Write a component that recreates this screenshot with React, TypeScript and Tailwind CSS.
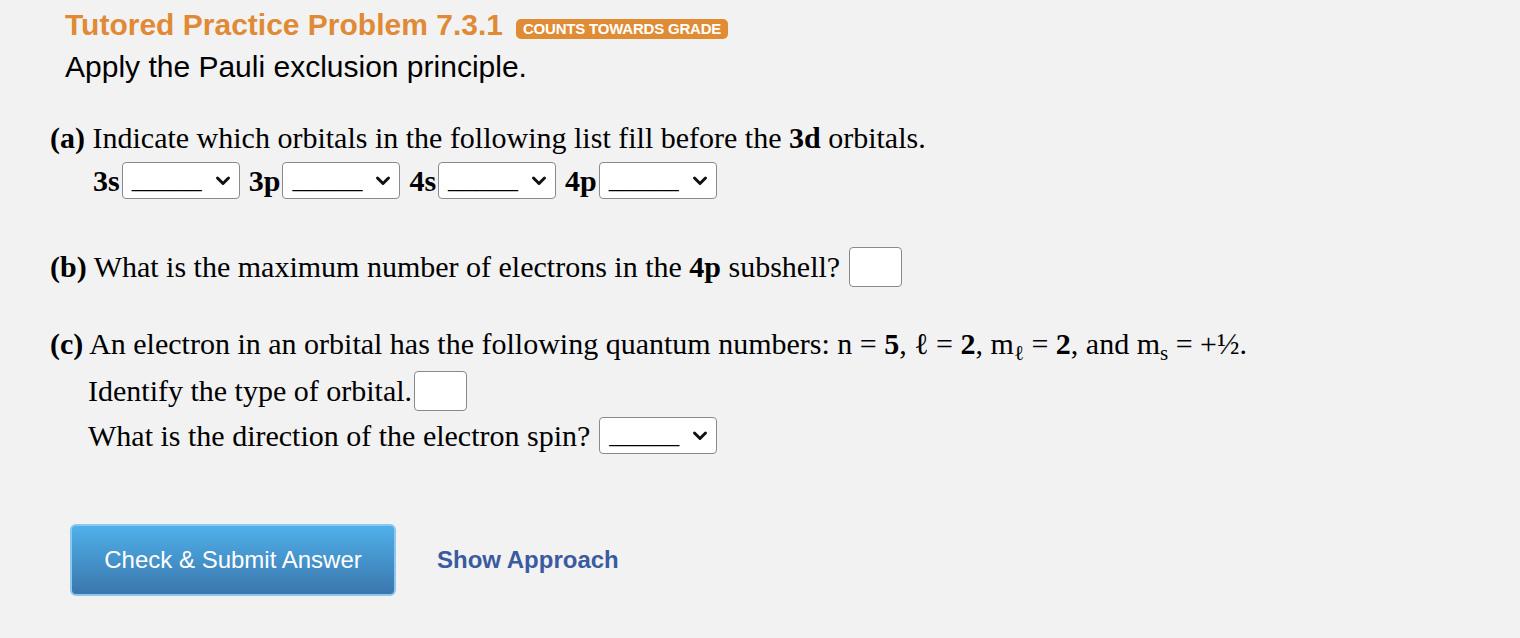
import React from "react";

const serif = "font-['Liberation_Serif','Times_New_Roman',serif]";

const Chevron = () => (
  <svg width="16" height="11" viewBox="0 0 16 11" className="shrink-0">
    <path d="M2.5 3 L8 8.5 L13.5 3" fill="none" stroke="#111" strokeWidth="3" strokeLinecap="round" strokeLinejoin="round" />
  </svg>
);

const Dropdown = () => (
  <div className="inline-flex items-center justify-between w-[118px] h-[37px] bg-white border border-[#8a8a8a] rounded-[4px] pl-[9px] pr-[8px] align-middle">
    <span className={`${serif} text-[28px] leading-none -mt-[4px] font-normal`}>_____</span>
    <Chevron />
  </div>
);

const Blank = ({ className = "" }: { className?: string }) => (
  <div className={`inline-block w-[53px] h-[40px] bg-white border border-[#8a8a8a] rounded-[4px] align-middle ${className}`} />
);

const Orbital = ({ label }: { label: string }) => (
  <div className="flex items-center gap-[2px]">
    <span className="font-bold">{label}</span>
    <Dropdown />
  </div>
);

export default function App() {
  return (
    <div className="min-h-screen w-full bg-[#f2f2f2] text-black">
      <div className="pl-[65px] pt-[7px] font-['Liberation_Sans',Arial,sans-serif]">
        <div className="flex items-center gap-[13px]">
          <h1 className="text-[30px] font-bold text-[#e08a36] leading-[36px]">
            Tutored Practice Problem 7.3.1
          </h1>
          <span className="mt-[8px] bg-[#e08c34] text-white text-[15px] font-bold leading-[20px] px-[7px] rounded-[5px] tracking-[-0.2px]">
            COUNTS TOWARDS GRADE
          </span>
        </div>
        <p className="text-[30px] leading-[36px] mt-[6px]">Apply the Pauli exclusion principle.</p>
      </div>

      <div className={`${serif} text-[30px] pl-[50px] mt-[36px]`}>
        <p className="leading-[34px]">
          <span className="font-bold">(a)</span> Indicate which orbitals in the following list fill before the{" "}
          <span className="font-bold">3d</span> orbitals.
        </p>
        <div className="flex items-center gap-[9px] pl-[43px] mt-[3px]">
          <Orbital label="3s" />
          <Orbital label="3p" />
          <Orbital label="4s" />
          <Orbital label="4p" />
        </div>

        <div className="flex items-center mt-[44px]">
          <p className="leading-[34px]">
            <span className="font-bold">(b)</span> What is the maximum number of electrons in the{" "}
            <span className="font-bold">4p</span> subshell?
          </p>
          <Blank className="ml-[9px]" />
        </div>

        <p className="leading-[34px] mt-[40px]">
          <span className="font-bold">(c)</span> An electron in an orbital has the following quantum numbers: n ={" "}
          <span className="font-bold">5</span>, ℓ = <span className="font-bold">2</span>, m
          <sub className="text-[21px] relative -bottom-[6px]">ℓ</sub> = <span className="font-bold">2</span>, and m
          <sub className="text-[21px] relative -bottom-[6px]">s</sub> = +½.
        </p>
        <div className="pl-[38px]">
          <div className="flex items-center mt-[10px]">
            <span className="leading-[34px]">Identify the type of orbital.</span>
            <Blank className="ml-[2px]" />
          </div>
          <div className="flex items-center mt-[6px]">
            <span className="leading-[34px]">What is the direction of the electron spin?</span>
            <div className="ml-[9px] flex">
              <Dropdown />
            </div>
          </div>
        </div>
      </div>

      <div className="flex items-center pl-[70px] mt-[70px] font-['Liberation_Sans',Arial,sans-serif]">
        <button className="w-[326px] h-[72px] rounded-[6px] border-2 border-[#8cc8ee] bg-gradient-to-b from-[#50b0ea] to-[#3a77ad] text-white text-[24px]">
          Check &amp; Submit Answer
        </button>
        <a className="ml-[41px] text-[24px] font-bold text-[#3b5ba0]">Show Approach</a>
      </div>
    </div>
  );
}
